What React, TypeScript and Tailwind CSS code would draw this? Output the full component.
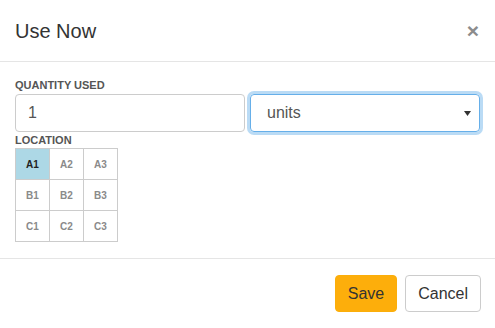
import { useState } from 'react'

const rows = [
  ['A1', 'A2', 'A3'],
  ['B1', 'B2', 'B3'],
  ['C1', 'C2', 'C3'],
]

export default function App() {
  const [qty, setQty] = useState('1')
  const [selected, setSelected] = useState('A1')

  return (
    <div className="h-[328px] w-[495px] bg-white font-['Liberation_Sans',Arial,sans-serif] text-[#333]">
      {/* header */}
      <div className="flex h-[62px] items-center justify-between border-b border-[#e5e5e5] pl-[15px] pr-[16px]">
        <h4 className="text-[20px] leading-[28px]">Use Now</h4>
        <button className="text-[21px] font-bold leading-none text-[#8c8c8c]">×</button>
      </div>

      {/* body */}
      <div className="px-[15px] pt-[15px] pb-4">
        <label className="mb-px block text-[11px] font-bold leading-4 text-[#555]">
          QUANTITY USED
        </label>
        <div className="grid grid-cols-2 gap-[5px]">
          <input
            value={qty}
            onChange={e => setQty(e.target.value)}
            className="h-[38px] rounded-[4px] border border-[#ccc] px-3 text-[16px] text-[#555] outline-none"
          />
          <div className="flex h-[38px] items-center justify-between rounded-[4px] border border-[#66afe9] pl-4 pr-[8px] text-[16px] text-[#555] shadow-[0_0_0_3px_rgba(102,175,233,0.45)]">
            <span>units</span>
            <svg width="7" height="5" viewBox="0 0 7 5">
              <path d="M0 0h7L3.5 5z" fill="#333" />
            </svg>
          </div>
        </div>

        <label className="mt-px block text-[11px] font-bold leading-[15px] text-[#555]">
          LOCATION
        </label>
        <table className="border-collapse">
          <tbody>
            {rows.map(row => (
              <tr key={row[0]}>
                {row.map(cell => (
                  <td
                    key={cell}
                    onClick={() => setSelected(cell)}
                    className={
                      cell === selected
                        ? 'h-[31px] w-[34px] border border-[#ccc] bg-[#add8e6] text-center text-[10px] font-bold text-[#222]'
                        : 'h-[31px] w-[34px] border border-[#ccc] text-center text-[10px] font-bold text-[#8a8a8a]'
                    }
                  >
                    {cell}
                  </td>
                ))}
              </tr>
            ))}
          </tbody>
        </table>
      </div>

      {/* footer */}
      <div className="flex justify-end gap-2 border-t border-[#e5e5e5] px-[14px] pt-4">
        <button className="rounded-[4px] border border-[#fbae0a] bg-[#fdae0b] px-3 py-[6px] text-[16px] leading-[23px] text-[#333]">
          Save
        </button>
        <button className="rounded-[4px] border border-[#ccc] bg-white px-3 py-[6px] text-[16px] leading-[23px] text-[#333]">
          Cancel
        </button>
      </div>
    </div>
  )
}
